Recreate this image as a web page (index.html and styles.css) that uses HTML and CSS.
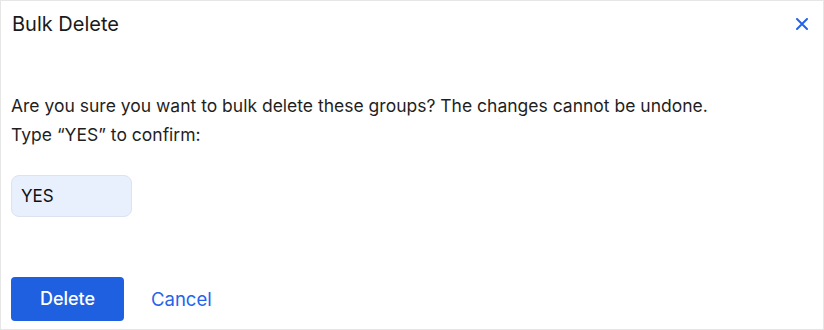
FILE: index.html
```html
<!DOCTYPE html>
<html>
<head>
<meta charset="utf-8">
<title>Bulk Delete</title>
<link rel="stylesheet" href="styles.css">
</head>
<body>
<div class="dialog">
	<div class="dialog_head">
		<h2 class="dialog_title">Bulk Delete</h2>
		<a class="close" href="###">
			<svg width="12" height="12" viewBox="0 0 12 12"><path d="M1 1L11 11M11 1L1 11" stroke="#2563eb" stroke-width="2" stroke-linecap="round"/></svg>
		</a>
	</div>
	<div class="dialog_body">
		<p>Are you sure you want to bulk delete these groups? The changes cannot be undone.</p>
		<p>Type “YES” to confirm:</p>
		<input class="confirm_input" type="text" value="YES">
	</div>
	<div class="dialog_foot">
		<a class="btn_delete" href="###">Delete</a>
		<a class="btn_cancel" href="###">Cancel</a>
	</div>
</div>
</body>
</html>
```
FILE: styles.css
```css
*{margin:0;padding:0;box-sizing:border-box;}
body{font-family:Inter,"Noto Sans",sans-serif;color:#1a1a1a;background:#fff;}
a{text-decoration:none;}
.dialog{width:824px;height:330px;border:1px solid #e6e6e6;display:flex;flex-direction:column;}
.dialog_head{display:flex;justify-content:space-between;padding:11px 15px 0 11px;height:45px;align-items:flex-start;}
.dialog_title{font-size:20px;font-weight:400;line-height:24px;color:#1a1a1a;}
.close{display:flex;margin-top:6px;}
.dialog_body{padding:45px 10px 0 10px;font-size:17.5px;line-height:29px;color:#1f1f1f;}
.confirm_input{display:block;margin-top:26px;width:121px;height:42px;border:1px solid #dde3ee;border-radius:8px;background:#e8effd;font:17px Inter,"Noto Sans",sans-serif;color:#111;padding:0 9px;outline:none;}
.dialog_foot{margin-top:auto;padding:0 10px 8px 10px;display:flex;align-items:center;gap:27px;}
.btn_delete{display:block;width:113px;height:44px;line-height:44px;text-align:center;background:#1f60e0;color:#fff;border-radius:4px;font-size:18px;font-weight:500;}
.btn_cancel{color:#2563eb;font-size:18.5px;}
```
